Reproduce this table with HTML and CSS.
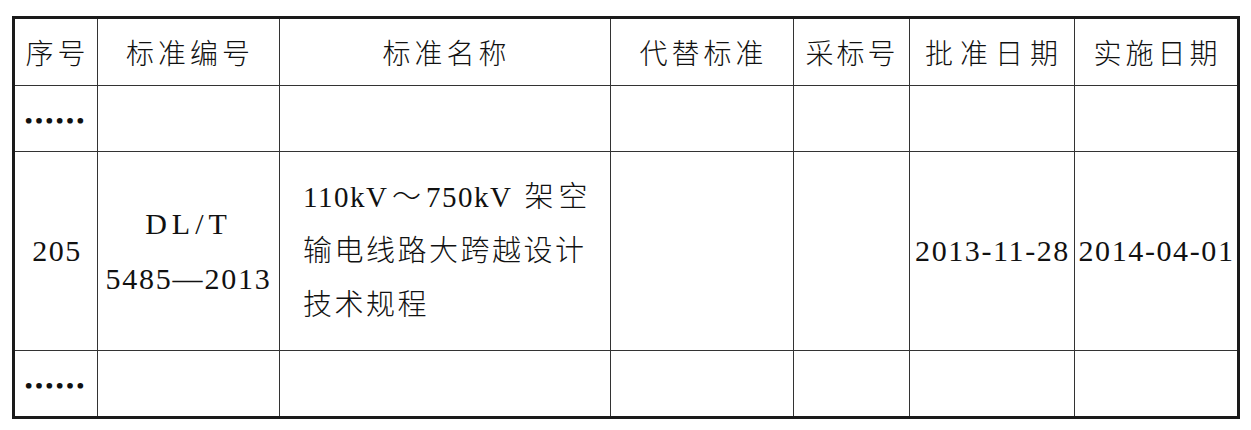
FILE: index.html
```html
<!DOCTYPE html>
<html lang="zh-CN">
<head>
<meta charset="utf-8">
<title>标准目录</title>
<link rel="stylesheet" href="styles.css">
</head>
<body>
<div class="page">
<table class="std">
<colgroup>
<col class="c1"><col class="c2"><col class="c3"><col class="c4"><col class="c5"><col class="c6"><col class="c7">
</colgroup>
<thead>
<tr class="head">
<th>序号</th><th>标准编号</th><th>标准名称</th><th>代替标准</th><th class="narrow">采标号</th><th class="wide">批准日期</th><th>实施日期</th>
</tr>
</thead>
<tbody>
<tr class="short">
<td class="dots">……</td><td></td><td></td><td></td><td></td><td></td><td></td>
</tr>
<tr class="tall">
<td class="num">205</td>
<td class="code"><span class="line">DL/T</span><span class="line">5485—2013</span></td>
<td class="name"><span class="line first">110kV～750kV 架空</span><span class="line">输电线路大跨越设计</span><span class="line">技术规程</span></td>
<td></td><td></td>
<td class="date">2013-11-28</td>
<td class="date">2014-04-01</td>
</tr>
<tr class="short">
<td class="dots">……</td><td></td><td></td><td></td><td></td><td></td><td></td>
</tr>
</tbody>
</table>
</div>
</body>
</html>
```
FILE: styles.css
```css
html, body {
  margin: 0;
  padding: 0;
  background: #ffffff;
}
.page {
  padding: 16px 0 0 12px;
}
.std {
  border-collapse: collapse;
  table-layout: fixed;
  width: 1226px;
  border: 3px solid #1a1a1a;
  font-family: "Liberation Serif", "Noto Sans CJK SC", serif;
  color: #111;
}
.c1 { width: 84px; }
.c2 { width: 182px; }
.c3 { width: 331px; }
.c4 { width: 183px; }
.c5 { width: 116px; }
.c6 { width: 165px; }
.c7 { width: 164px; }
.std th, .std td {
  border: 1.5px solid #333;
  padding: 0;
  text-align: center;
  vertical-align: middle;
  font-weight: 300;
}
.std th {
  font-family: "Noto Sans CJK SC", sans-serif;
  font-size: 28px;
  letter-spacing: 4px;
  text-indent: 3px;
  height: 66px;
}
.std th.narrow { letter-spacing: 3px; text-indent: 1px; }
.std th.wide { letter-spacing: 7px; text-indent: 6px; }
.short td { height: 65px; }
.tall td { height: 198px; }
.std td.dots {
  font-family: "Noto Sans CJK SC", sans-serif;
  font-size: 31px;
  letter-spacing: 0;
  -webkit-text-stroke: 2.2px #111;
  text-indent: -3px;
}
.std td.num {
  font-size: 30px;
  letter-spacing: 1.5px;
  text-indent: 2px;
}
.std td.date {
  font-size: 30px;
  letter-spacing: 1.6px;
  white-space: nowrap;
  text-indent: 1px;
}
.std td.code {
  font-size: 30px;
  line-height: 55px;
  letter-spacing: 1.8px;
}
.std td.code .line:first-child { letter-spacing: 5px; }
.line { display: block; white-space: nowrap; }
.std td.name {
  text-align: left;
  padding: 0 0 0 23px;
  font-size: 29px;
  line-height: 54px;
  letter-spacing: 2.5px;
  font-family: "Liberation Serif", "Noto Sans CJK SC", serif;
}
.name .first {
  width: 286px;
  white-space: normal;
  text-align: justify;
  text-align-last: justify;
  letter-spacing: 1.5px;
}
```
